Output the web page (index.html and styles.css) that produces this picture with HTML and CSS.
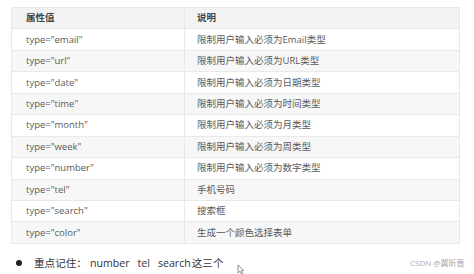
FILE: index.html
```
<!DOCTYPE html>
<html>
<head>
<meta charset="utf-8">
<link rel="stylesheet" href="styles.css">
</head>
<body>
<table class="attr-table">
  <thead>
    <tr><th class="c1">属性值</th><th class="c2">说明</th></tr>
  </thead>
  <tbody>
    <tr><td>type="email"</td><td>限制用户输入必须为Email类型</td></tr>
    <tr><td>type="url"</td><td>限制用户输入必须为URL类型</td></tr>
    <tr><td>type="date"</td><td>限制用户输入必须为日期类型</td></tr>
    <tr><td>type="time"</td><td>限制用户输入必须为时间类型</td></tr>
    <tr><td>type="month"</td><td>限制用户输入必须为月类型</td></tr>
    <tr><td>type="week"</td><td>限制用户输入必须为周类型</td></tr>
    <tr><td>type="number"</td><td>限制用户输入必须为数字类型</td></tr>
    <tr><td>type="tel"</td><td>手机号码</td></tr>
    <tr><td>type="search"</td><td>搜索框</td></tr>
    <tr><td>type="color"</td><td>生成一个颜色选择表单</td></tr>
  </tbody>
</table>
<ul class="notes">
  <li><span class="lead">重点记住：</span><span class="kw">number</span><span class="kw">tel</span><span class="kw last">search</span>这三个</li>
</ul>
<svg class="cursor" width="8" height="11" viewBox="0 0 8 11"><path d="M1 1 L1 9 L3 7.2 L4.6 10.2 L5.8 9.6 L4.3 6.7 L6.8 6.5 Z" fill="#fff" stroke="#777" stroke-width="0.8"/></svg>
<div class="watermark">CSDN @冀昕蔷</div>
</body>
</html>
```
FILE: styles.css
```
html, body {
  margin: 0;
  padding: 0;
  background: #fff;
}
body {
  position: relative;
  width: 474px;
  height: 274px;
  overflow: hidden;
  padding: 7px 0 0 11px;
  box-sizing: border-box;
  font-family: "Open Sans", "Noto Sans CJK SC", sans-serif;
}
.attr-table {
  width: 449px;
  border-collapse: collapse;
  font-size: 9.5px;
  color: #5a5a5a;
  table-layout: fixed;
}
.attr-table th,
.attr-table td {
  height: 21.45px;
  padding: 0 0 0 14px;
  text-align: left;
  border: 1px solid #e9e9e9;
  box-sizing: border-box;
  line-height: 12px;
  white-space: nowrap;
}
.attr-table td:nth-child(2),
.attr-table th.c2 {
  padding-left: 12px;
}
.attr-table th {
  font-weight: 600;
  color: #444;
  background: #f3f3f3;
}
.attr-table .c1 { width: 173px; }
.attr-table tbody tr:nth-child(even) td { background: #f7f7f7; }
.attr-table tbody tr:nth-child(odd) td { background: #ffffff; }
.notes {
  margin: 11px 0 0 0;
  padding: 0 0 0 23px;
  font-size: 10.6px;
  color: #333;
  list-style: none;
}
.notes li {
  position: relative;
  line-height: 16px;
  white-space: nowrap;
}
.notes .lead {
  display: inline-block;
  width: 56px;
}
.notes .kw {
  margin-right: 8px;
}
.notes .kw.last {
  margin-right: 1px;
}
.notes li::before {
  content: "";
  position: absolute;
  left: -18px;
  top: 5px;
  width: 6px;
  height: 6px;
  border-radius: 50%;
  background: #222;
}
.cursor {
  position: absolute;
  left: 237px;
  top: 264px;
}
.watermark {
  position: absolute;
  left: 410px;
  top: 257px;
  font-size: 8px;
  color: #aaa;
}
```
